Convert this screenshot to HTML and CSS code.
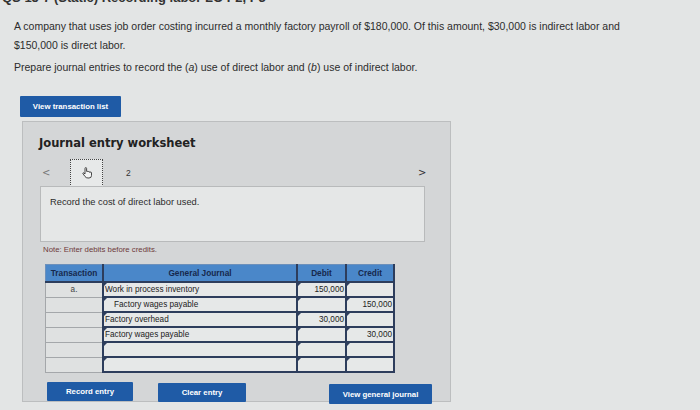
FILE: index.html
```html
<!DOCTYPE html>
<html>
<head>
<meta charset="utf-8">
<link rel="stylesheet" href="styles.css">
</head>
<body>
<div class="page">
  <div class="crumb">QS 15-7 (Static) Recording labor LO P2, P3</div>
  <p class="para">A company that uses job order costing incurred a monthly factory payroll of $180,000. Of this amount, $30,000 is indirect labor and<br>$150,000 is direct labor.</p>
  <p class="para prep">Prepare journal entries to record the (<i>a</i>) use of direct labor and (<i>b</i>) use of indirect labor.</p>
  <button class="btn btn-list">View transaction list</button>

  <div class="panel">
    <h2 class="ws-title">Journal entry worksheet</h2>
    <div class="nav">
      <span class="arrow">&lt;</span>
      <span class="tab">
        <svg width="12" height="12" viewBox="0 0 12 12">
          <path d="M4 1.5 V7 L3 6 Q2 5.4 1.8 6.4 L4 9.5 Q5 11 7 11 H8 Q10.5 11 10.5 8.5 V6 Q10.5 5 9.5 5 Q9 5 8.8 5.5 Q8.7 4.5 7.8 4.5 Q7.2 4.5 7 5 Q6.8 4 5.9 4.2 L5.6 4.4 V1.5 Q5.6 0.6 4.8 0.6 Q4 0.6 4 1.5 Z" fill="#f4f5f5" stroke="#333" stroke-width="0.9" stroke-linejoin="round"/>
        </svg>
      </span>
      <span class="tabnum">2</span>
      <span class="arrow arrow-r">&gt;</span>
    </div>
    <div class="task">Record the cost of direct labor used.</div>
    <div class="note">Note: Enter debits before credits.</div>
    <table class="jt">
      <thead>
        <tr><th class="c-t">Transaction</th><th class="c-g">General Journal</th><th class="c-d">Debit</th><th class="c-c">Credit</th></tr>
      </thead>
      <tbody>
        <tr><td class="c-t">a.</td><td class="in">Work in process inventory</td><td class="in num">150,000</td><td class="in num"></td></tr>
        <tr><td class="c-t"></td><td class="in ind">Factory wages payable</td><td class="in num"></td><td class="in num">150,000</td></tr>
        <tr><td class="c-t"></td><td class="in">Factory overhead</td><td class="in num">30,000</td><td class="in num"></td></tr>
        <tr><td class="c-t"></td><td class="in">Factory wages payable</td><td class="in num"></td><td class="in num">30,000</td></tr>
        <tr><td class="c-t"></td><td class="in"></td><td class="in num"></td><td class="in num"></td></tr>
        <tr><td class="c-t"></td><td class="in"></td><td class="in num"></td><td class="in num"></td></tr>
      </tbody>
    </table>
    <div class="actions">
      <button class="btn btn-rec">Record entry</button>
      <button class="btn btn-clr">Clear entry</button>
      <button class="btn btn-gj">View general journal</button>
    </div>
  </div>
</div>
</body>
</html>
```
FILE: styles.css
```css
html, body {
  margin: 0;
  padding: 0;
  background: #e3e5e5;
}
.page {
  width: 700px;
  height: 410px;
  overflow: hidden;
  font-family: "Liberation Sans", Arial, sans-serif;
  color: #2a2a2a;
}
.crumb {
  margin-top: -9px;
  padding-left: 2px;
  font-size: 13px;
  font-weight: bold;
  color: #333;
  height: 14px;
  line-height: 14px;
  white-space: nowrap;
}
.para {
  margin: 12px 0 0 14px;
  font-size: 10.5px;
  line-height: 19px;
  color: #2c2c2c;
  white-space: nowrap;
}
.para.prep {
  margin-top: 3px;
}
.para i {
  font-style: italic;
}
.btn {
  display: block;
  border: none;
  background: #1f5ba6;
  color: #fff;
  font-family: "Liberation Sans", Arial, sans-serif;
  font-weight: bold;
  font-size: 7.8px;
  padding: 0;
  border-radius: 1px;
  flex-shrink: 0;
}
.btn-list {
  margin: 19px 0 0 20px;
  width: 101px;
  height: 21px;
}
.panel {
  margin: 4px 0 0 22px;
  width: 429px;
  height: 281px;
  background: #d4d6d7;
  border: 1px solid #bcbebf;
  box-sizing: border-box;
  padding: 13px 0 0 0;
  display: flex;
  flex-direction: column;
  align-items: flex-start;
}
.panel > * {
  flex-shrink: 0;
}
.ws-title {
  margin: 0 0 0 16px;
  font-family: "DejaVu Sans", Verdana, sans-serif;
  font-weight: bold;
  font-size: 11.5px;
  line-height: 16px;
  color: #222;
}
.nav {
  margin-top: 8px;
  height: 27px;
  width: 100%;
  display: flex;
  align-items: center;
}
.arrow {
  font-family: "DejaVu Sans", sans-serif;
  font-size: 10px;
  color: #777;
  margin-left: 19px;
  width: 8px;
}
.tab {
  margin-left: 20px;
  width: 33px;
  height: 28px;
  box-sizing: border-box;
  border: 1.5px dotted #444;
  background: #e7e9e9;
  display: flex;
  align-items: center;
  justify-content: center;
  align-self: flex-start;
}
.tabnum {
  margin-left: 23px;
  font-size: 8.5px;
  color: #333;
}
.arrow-r {
  margin-left: auto;
  margin-right: 24px;
  color: #333;
  font-size: 10px;
}
.task {
  margin-left: 17px;
  width: 385px;
  height: 56px;
  box-sizing: border-box;
  background: #e5e7e7;
  border: 1px solid #b8babb;
  padding: 9px 0 0 9px;
  font-size: 9.3px;
  line-height: 12px;
  color: #2b2b2b;
}
.note {
  margin: 3px 0 0 20px;
  font-size: 7.8px;
  line-height: 10px;
  color: #6e3a3a;
}
.jt {
  margin: 9px 0 0 22px;
  border-collapse: collapse;
  font-size: 8.2px;
  table-layout: fixed;
  width: 341px;
}
.jt th {
  background: #4a87c9;
  color: #17294d;
  font-weight: bold;
  font-size: 8.3px;
  height: 16px;
  padding: 0;
  border: 1px solid #6c90bb;
  border-bottom: 2px solid #2d3d5c;
  text-align: center;
}
.jt th.c-g, .jt th.c-d, .jt th.c-c {
  border-left: 2px solid #2d3d5c;
}
.jt th.c-c {
  border-right: 2px solid #2d3d5c;
}
.c-t { width: 56px; }
.c-g { width: 192px; }
.c-d { width: 47px; }
.c-c { width: 46px; }
.jt td {
  height: 13px;
  padding: 0;
  color: #222;
  white-space: nowrap;
  overflow: hidden;
}
.jt td.c-t {
  background: #dfe1e1;
  border: 1px solid #a4a7aa;
  text-align: center;
  color: #444;
}
.jt td.in {
  position: relative;
  background: #e6e8e8;
  border: 2px solid #2d3d5c;
  padding-left: 1px;
}
.jt td.in::before {
  content: "";
  position: absolute;
  left: 0;
  top: 0;
  width: 0;
  height: 0;
  border-top: 3px solid #2d3d5c;
  border-right: 3px solid transparent;
}
.jt td.ind {
  padding-left: 10px;
}
.jt td.num {
  text-align: right;
  padding-right: 1px;
}
.actions {
  display: flex;
  align-items: flex-start;
  margin-top: 9px;
}
.btn-rec {
  margin-left: 24px;
  width: 86px;
  height: 19px;
}
.btn-clr {
  margin-left: 25px;
  width: 88px;
  height: 19px;
  margin-top: 1px;
}
.btn-gj {
  margin-left: 83px;
  width: 103px;
  height: 20px;
  margin-top: 2px;
}
```
